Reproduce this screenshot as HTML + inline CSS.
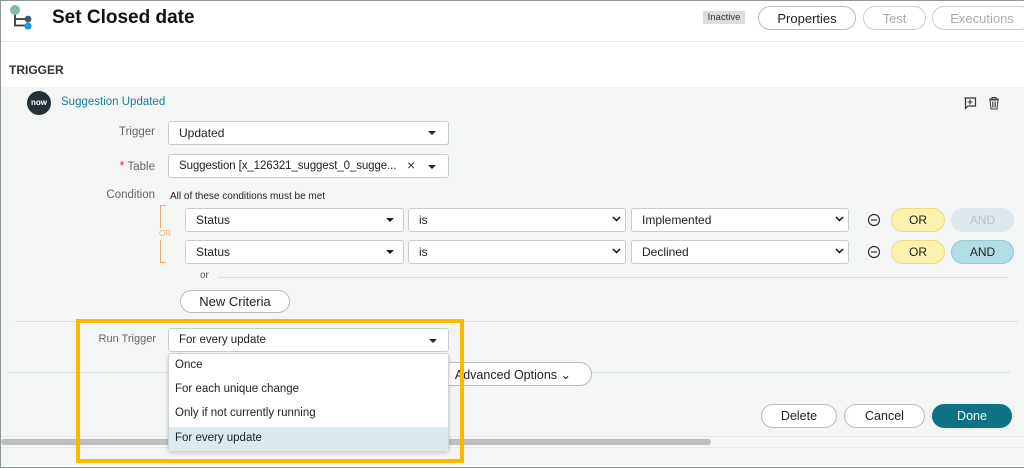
<!DOCTYPE html>
<html><head><style>
*{box-sizing:border-box;margin:0;padding:0}
body{width:1024px;height:468px;overflow:hidden;font-family:"Liberation Sans",sans-serif;background:#fff;position:relative;color:#222}
.a{position:absolute}
.pill{position:absolute;border:1px solid #b8bcbc;border-radius:13px;background:#fff;font-size:13px;display:flex;align-items:center;justify-content:center}
.sel{position:absolute;border:1px solid #c8cccc;border-radius:3px;background:#fff;font-size:12px;display:flex;align-items:center;padding-left:10px;color:#222}
.lbl{position:absolute;font-size:11.5px;color:#666;text-align:right}
.tri{position:absolute;width:0;height:0;border-left:4px solid transparent;border-right:4px solid transparent;border-top:4px solid #222}
</style></head><body>
<div class="a" style="left:0;top:0;width:1024px;height:468px;border:1px solid #8e9696;border-right:none"></div>
<svg class="a" style="left:9px;top:4px" width="26" height="27" viewBox="0 0 26 27">
<path d="M6 9 V21.5 H18 M6 15 H18" stroke="#2d3a40" stroke-width="1.8" fill="none"/>
<circle cx="6" cy="6" r="5" fill="#86b7a0"/><circle cx="19" cy="15" r="3.4" fill="#3e5a6e"/><circle cx="19" cy="22" r="3.6" fill="#1a9be0"/>
</svg>
<div class="a" style="left:52px;top:7px;font-size:19px;font-weight:bold;color:#111">Set Closed date</div>
<div class="a" style="left:703px;top:11px;width:42px;height:13px;background:#dcdcdc;font-size:9.5px;color:#333;text-align:center;line-height:13px">Inactive</div>
<div class="pill" style="left:758px;top:6px;width:98px;height:24px;color:#222">Properties</div>
<div class="pill" style="left:863px;top:6px;width:63px;height:24px;color:#aaa;border-color:#ccc">Test</div>
<div class="pill" style="left:932px;top:6px;width:100px;height:24px;color:#aaa;border-color:#ccc">Executions</div>
<div class="a" style="left:1px;top:41px;width:1023px;height:1px;background:#e6e8e8"></div>
<div class="a" style="left:9px;top:63px;font-size:12px;font-weight:bold;color:#333">TRIGGER</div>
<div class="a" style="left:1px;top:87px;width:1023px;height:378px;background:#f4f6f6"></div>
<div class="a" style="left:27px;top:91px;width:24px;height:24px;border-radius:50%;background:#243034;color:#fff;font-size:8px;font-weight:bold;text-align:center;line-height:24px">now</div>
<div class="a" style="left:61px;top:96px;font-size:11.5px;color:#1a7d92">Suggestion Updated</div>
<svg class="a" style="left:963px;top:96px" width="40" height="14" viewBox="0 0 40 14">
<path d="M1.5 2 H12.5 V10 H5 L2.5 12.5 V2 Z" stroke="#333" stroke-width="1.2" fill="none"/><path d="M7 3.5 V8.5 M4.5 6 H9.5" stroke="#333" stroke-width="1.1"/>
<path d="M26 3 H36 M29 3 V1.5 H33 V3 M27 4 L28 13 H34 L35 4 Z" stroke="#444" stroke-width="1.1" fill="none"/><path d="M29.5 5.5V11.5M31 5.5V11.5M32.5 5.5V11.5" stroke="#444" stroke-width=".8"/>
</svg>
<div class="lbl" style="left:80px;width:75px;top:126px">Trigger</div>
<div class="sel" style="left:168px;top:121px;width:281px;height:24px">Updated</div><div class="tri" style="left:428px;top:131px"></div>
<div class="lbl" style="left:80px;width:75px;top:158px"><span style="color:#d33;font-size:13px">*</span> Table</div>
<div class="sel" style="left:168px;top:154px;width:281px;height:24px;font-size:11.5px;letter-spacing:-0.1px"><span style="white-space:nowrap">Suggestion [x_126321_suggest_0_sugge...</span></div>
<div class="a" style="left:407px;top:157px;font-size:14px;color:#333">×</div><div class="tri" style="left:428px;top:165px"></div>
<div class="lbl" style="left:80px;width:75px;top:189px">Condition</div>
<div class="a" style="left:170px;top:191px;font-size:10px;color:#222">All of these conditions must be met</div>
<div class="a" style="left:160px;top:205px;width:6px;height:58px;border:1px solid #f5a66a;border-right:none"></div>
<div class="a" style="left:159px;top:228px;width:14px;height:12px;background:#f4f6f6;font-size:8px;color:#f5a66a;line-height:12px">OR</div>
<div class="sel" style="left:185px;top:208px;width:219px;height:24px">Status</div><div class="tri" style="left:386px;top:218px"></div>
<div class="sel" style="left:408px;top:208px;width:218px;height:24px">is</div>
<div class="sel" style="left:631px;top:208px;width:218px;height:24px">Implemented</div>
<div class="sel" style="left:185px;top:240px;width:219px;height:24px">Status</div><div class="tri" style="left:386px;top:250px"></div>
<div class="sel" style="left:408px;top:240px;width:218px;height:24px">is</div>
<div class="sel" style="left:631px;top:240px;width:218px;height:24px">Declined</div>
<svg class="a" style="left:612px;top:216px" width="232" height="40"><path d="M1 1 L4.5 4.5 L8 1 M224 1 L227.5 4.5 L231 1 M1 33 L4.5 36.5 L8 33 M224 33 L227.5 36.5 L231 33" stroke="#222" stroke-width="1.6" fill="none"/></svg>
<svg class="a" style="left:867px;top:213px" width="14" height="46"><circle cx="7" cy="7" r="5.5" stroke="#333" stroke-width="1.2" fill="none"/><path d="M4 7H10" stroke="#333" stroke-width="1.2"/><circle cx="7" cy="39" r="5.5" stroke="#333" stroke-width="1.2" fill="none"/><path d="M4 39H10" stroke="#333" stroke-width="1.2"/></svg>
<div class="pill" style="left:891px;top:208px;width:54px;height:24px;background:#fdf1b0;border-color:#f0dc80;font-size:12px">OR</div>
<div class="pill" style="left:951px;top:208px;width:63px;height:24px;background:#dde9ee;border-color:#dde9ee;color:#b7c4c8;font-size:12px">AND</div>
<div class="pill" style="left:891px;top:240px;width:54px;height:24px;background:#fdf1b0;border-color:#f0dc80;font-size:12px">OR</div>
<div class="pill" style="left:951px;top:240px;width:63px;height:24px;background:#b2dde5;border-color:#95cbd6;font-size:12px">AND</div>
<div class="a" style="left:200px;top:270px;font-size:10px;color:#555">or</div>
<div class="a" style="left:218px;top:277px;width:790px;height:1px;background:#dcdfe0"></div>
<div class="pill" style="left:180px;top:290px;width:110px;height:23px;font-size:13px">New Criteria</div>
<div class="a" style="left:15px;top:321px;width:1003px;height:1px;background:#dcdfe0"></div>
<div class="lbl" style="left:80px;width:76px;top:333px;font-size:11px">Run Trigger</div>
<div class="sel" style="left:168px;top:328px;width:281px;height:24px;font-size:11.5px">For every update</div><div class="tri" style="left:429px;top:339px"></div>
<div class="a" style="left:8px;top:372px;width:1002px;height:1px;background:#dcdfe0"></div>
<div class="pill" style="left:420px;top:362px;width:172px;height:24px;font-size:12.5px;justify-content:flex-end;padding-right:20px">Advanced Options ⌄</div>
<div class="pill" style="left:761px;top:404px;width:76px;height:24px;font-size:12.5px">Delete</div>
<div class="pill" style="left:844px;top:404px;width:81px;height:24px;font-size:12.5px">Cancel</div>
<div class="pill" style="left:932px;top:404px;width:80px;height:24px;font-size:12.5px;background:#0e7184;border-color:#0e7184;color:#fff">Done</div>
<div class="a" style="left:1px;top:436px;width:1023px;height:1px;background:#e8eaea"></div>
<div class="a" style="left:1px;top:439px;width:710px;height:6px;background:#bfbfbf;border-radius:3px"></div>
<div class="a" style="left:1px;top:447px;width:1023px;height:1px;background:#e8eaea"></div>
<div class="a" style="left:168px;top:353px;width:281px;height:98px;background:#fff;border:1px solid #d0d4d4;border-radius:3px;box-shadow:0 2px 4px rgba(0,0,0,.2);font-size:11.5px;color:#222">
<div style="position:absolute;left:6px;top:5px">Once</div>
<div style="position:absolute;left:6px;top:29px">For each unique change</div>
<div style="position:absolute;left:6px;top:53px">Only if not currently running</div>
<div style="position:absolute;left:0;top:73px;width:279px;height:24px;background:#dce9ee"></div>
<div style="position:absolute;left:6px;top:78px">For every update</div>
</div>
<div class="a" style="left:76px;top:319px;width:388px;height:144px;border:4px solid #fbb800"></div>
</body></html>
